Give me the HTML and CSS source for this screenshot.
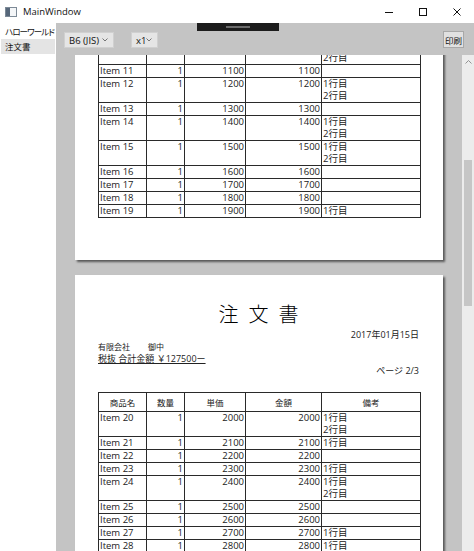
FILE: index.html
```html
<!DOCTYPE html>
<html lang="ja">
<head>
<meta charset="utf-8">
<title>MainWindow</title>
<link rel="stylesheet" href="styles.css">
</head>
<body>
<div class="window">
  <div class="titlebar">
    <svg class="app-icon" width="12" height="10" viewBox="0 0 12 10">
      <rect x="0.5" y="0.5" width="11" height="9" fill="#f4f6f8" stroke="#7d8a97"/>
      <rect x="1" y="1" width="4" height="8" fill="#56677a"/>
    </svg>
    <span class="title">MainWindow</span>
    <div class="caption-buttons">
      <span class="cap-btn"><svg width="10" height="10" viewBox="0 0 10 10"><path d="M1 5.5H9" stroke="#111" stroke-width="1"/></svg></span>
      <span class="cap-btn"><svg width="10" height="10" viewBox="0 0 10 10"><rect x="1.5" y="1.5" width="7" height="7" fill="none" stroke="#111" stroke-width="1"/></svg></span>
      <span class="cap-btn"><svg width="10" height="10" viewBox="0 0 10 10"><path d="M1.5 1.5L8.5 8.5M8.5 1.5L1.5 8.5" stroke="#111" stroke-width="1"/></svg></span>
    </div>
  </div>
  <div class="client">
    <div class="sidebar">
      <div class="nav-item">ハローワールド</div>
      <div class="nav-item selected">注文書</div>
    </div>
    <div class="main">
      <div class="debug-bar"><span class="handle"></span></div>
      <div class="toolbar">
        <div class="combo combo-size">B6 (JIS)<svg class="chev" width="6" height="4" viewBox="0 0 6 4"><path d="M0.5 0.5L3 3L5.5 0.5" fill="none" stroke="#666" stroke-width="0.9"/></svg></div>
        <div class="combo combo-zoom">x1<svg class="chev" width="6" height="4" viewBox="0 0 6 4"><path d="M0.5 0.5L3 3L5.5 0.5" fill="none" stroke="#666" stroke-width="0.9"/></svg></div>
        <div class="spacer"></div>
        <div class="print-btn">印刷</div>
      </div>
      <div class="viewer">
        <div class="scroll">
          <div class="pages">
            <div class="page page-first">
              <table class="sheet">
                <colgroup><col class="c1"><col class="c2"><col class="c3"><col class="c4"><col class="c5"></colgroup>
                <tr><td>Item 10</td><td class="num">1</td><td class="num">1000</td><td class="num">1000</td><td>1行目<br>2行目</td></tr>
                <tr><td>Item 11</td><td class="num">1</td><td class="num">1100</td><td class="num">1100</td><td></td></tr>
                <tr><td>Item 12</td><td class="num">1</td><td class="num">1200</td><td class="num">1200</td><td>1行目<br>2行目</td></tr>
                <tr><td>Item 13</td><td class="num">1</td><td class="num">1300</td><td class="num">1300</td><td></td></tr>
                <tr><td>Item 14</td><td class="num">1</td><td class="num">1400</td><td class="num">1400</td><td>1行目<br>2行目</td></tr>
                <tr><td>Item 15</td><td class="num">1</td><td class="num">1500</td><td class="num">1500</td><td>1行目<br>2行目</td></tr>
                <tr><td>Item 16</td><td class="num">1</td><td class="num">1600</td><td class="num">1600</td><td></td></tr>
                <tr><td>Item 17</td><td class="num">1</td><td class="num">1700</td><td class="num">1700</td><td></td></tr>
                <tr><td>Item 18</td><td class="num">1</td><td class="num">1800</td><td class="num">1800</td><td></td></tr>
                <tr><td>Item 19</td><td class="num">1</td><td class="num">1900</td><td class="num">1900</td><td>1行目</td></tr>
              </table>
            </div>
            <div class="page">
              <div class="doc-title">注文書</div>
              <div class="doc-date">2017年01月15日</div>
              <div class="doc-client"><span class="client-name">有限会社</span>御中</div>
              <div class="doc-total"><span class="u">税抜 合計金額 ￥127500ー</span></div>
              <div class="doc-page">ページ 2/3</div>
              <table class="sheet">
                <colgroup><col class="c1"><col class="c2"><col class="c3"><col class="c4"><col class="c5"></colgroup>
                <tr class="head"><th>商品名</th><th>数量</th><th>単価</th><th>金額</th><th>備考</th></tr>
                <tr><td>Item 20</td><td class="num">1</td><td class="num">2000</td><td class="num">2000</td><td>1行目<br>2行目</td></tr>
                <tr><td>Item 21</td><td class="num">1</td><td class="num">2100</td><td class="num">2100</td><td>1行目</td></tr>
                <tr><td>Item 22</td><td class="num">1</td><td class="num">2200</td><td class="num">2200</td><td></td></tr>
                <tr><td>Item 23</td><td class="num">1</td><td class="num">2300</td><td class="num">2300</td><td>1行目</td></tr>
                <tr><td>Item 24</td><td class="num">1</td><td class="num">2400</td><td class="num">2400</td><td>1行目<br>2行目</td></tr>
                <tr><td>Item 25</td><td class="num">1</td><td class="num">2500</td><td class="num">2500</td><td></td></tr>
                <tr><td>Item 26</td><td class="num">1</td><td class="num">2600</td><td class="num">2600</td><td></td></tr>
                <tr><td>Item 27</td><td class="num">1</td><td class="num">2700</td><td class="num">2700</td><td>1行目</td></tr>
                <tr><td>Item 28</td><td class="num">1</td><td class="num">2800</td><td class="num">2800</td><td>1行目</td></tr>
                <tr><td>Item 29</td><td class="num">1</td><td class="num">2900</td><td class="num">2900</td><td></td></tr>
              </table>
            </div>
          </div>
        </div>
        <div class="scrollbar">
          <div class="sb-arrow"><svg width="7" height="4" viewBox="0 0 7 4"><path d="M0.5 3.5L3.5 0.5L6.5 3.5" fill="none" stroke="#888" stroke-width="0.9"/></svg></div>
          <div class="sb-track"><div class="sb-thumb"></div></div>
        </div>
      </div>
    </div>
  </div>
</div>
</body>
</html>
```

FILE: styles.css
```css
* { box-sizing: border-box; }
html, body { margin: 0; padding: 0; }
body {
  width: 474px;
  height: 551px;
  overflow: hidden;
  background: #fff;
  color: #000;
  font-family: "Open Sans", "Noto Sans CJK JP", sans-serif;
  font-size: 9px;
}
.window { width: 474px; height: 551px; display: flex; flex-direction: column; }

.titlebar { height: 23px; flex: none; display: flex; align-items: center; background: #fff; }
.app-icon { margin-left: 5px; flex: none; }
.title { margin-left: 6px; font-size: 9.5px; color: #111; }
.caption-buttons { margin-left: auto; display: flex; }
.cap-btn { width: 34px; height: 23px; display: flex; align-items: center; justify-content: center; }

.client { flex: 1; display: flex; min-height: 0; }
.sidebar { width: 56px; flex: none; background: #fff; padding-top: 1px; }
.nav-item {
  height: 15px; line-height: 15px; margin-left: 1px; width: 54px; padding-left: 4px;
  font-family: "Noto Sans CJK JP", sans-serif; font-size: 8.5px; font-feature-settings: "palt";
  letter-spacing: -0.9px; white-space: nowrap; color: #111;
}
.nav-item.selected { background: #e4e4e4; letter-spacing: 0; }

.main { flex: 1; min-width: 0; background: #c4c4c4; display: flex; flex-direction: column; position: relative; }
.debug-bar {
  position: absolute; left: 141px; top: 0; width: 82px; height: 8px; background: #1c1c1c;
  display: flex; align-items: center; justify-content: center;
}
.debug-bar .handle { width: 24px; height: 2px; background: #6b6b6b; }

.toolbar { height: 32px; flex: none; display: flex; align-items: flex-start; padding: 9px 10px 0 8px; }
.combo {
  height: 16px; display: flex; align-items: center; justify-content: space-between;
  background: #e5e5e5; border: 1px solid #d0d0d0; padding: 0 5px 0 4px;
  font-size: 9.5px; color: #111;
}
.combo-size { width: 50px; }
.combo-zoom { width: 27px; margin-left: 17px; }
.chev { flex: none; }
.spacer { flex: 1; }
.print-btn {
  margin-top: -1px; height: 17px; width: 21px; display: flex; align-items: center; justify-content: center;
  background: #e1e1e1; border: 1px solid #a8a8a8; font-family: "Noto Sans CJK JP", sans-serif; font-size: 8.5px; color: #111;
}

.viewer { flex: 1; min-height: 0; display: flex; }
.scroll { flex: 1; overflow: hidden; }
.pages { padding-left: 19px; }
.page {
  width: 368px; background: #fff; padding: 0 24px 0 23px; margin-bottom: 15px;
  box-shadow: 2px 2px 2px rgba(0,0,0,0.55);
}
.page-first { margin-top: -16px; padding-bottom: 42px; }

.sheet { border-collapse: collapse; table-layout: fixed; width: 322px; }
.sheet col.c1 { width: 48px; }
.sheet col.c2 { width: 38px; }
.sheet col.c3 { width: 61px; }
.sheet col.c4 { width: 76px; }
.sheet col.c5 { width: 99px; }
.sheet td, .sheet th {
  border: 1px solid #2a2a2a; padding: 0 1px; font-size: 9.5px; line-height: 12px; height: 12px;
  vertical-align: top; font-weight: normal; white-space: nowrap; overflow: hidden; color: #222;
}
.sheet td.num { text-align: right; }
.sheet tr.head th { height: 19px; vertical-align: middle; text-align: center; font-family: "Noto Sans CJK JP", sans-serif; font-size: 8.5px; }

.doc-title {
  padding-top: 27px; height: 51px; line-height: 24px; text-align: center;
  font-family: "Noto Sans CJK JP", sans-serif; font-weight: 300; font-size: 20px; letter-spacing: 10px; padding-left: 10px;
}
.doc-date, .doc-client, .doc-total, .doc-page { line-height: 12px; height: 12px; white-space: nowrap; color: #222; }
.doc-date { margin-top: 3px; text-align: right; }
.doc-client { font-family: "Noto Sans CJK JP", sans-serif; font-size: 8px; }
.client-name { display: inline-block; width: 50px; }
.doc-total .u { text-decoration: underline; }
.doc-page { text-align: right; margin-bottom: 15px; }

.scrollbar { width: 12px; flex: none; background: #ececec; display: flex; flex-direction: column; }
.sb-arrow { height: 13px; display: flex; align-items: center; justify-content: center; }
.sb-track { flex: 1; padding: 0 2px; }
.sb-thumb { margin-top: 92px; height: 146px; background: #c6c6c6; }
```
